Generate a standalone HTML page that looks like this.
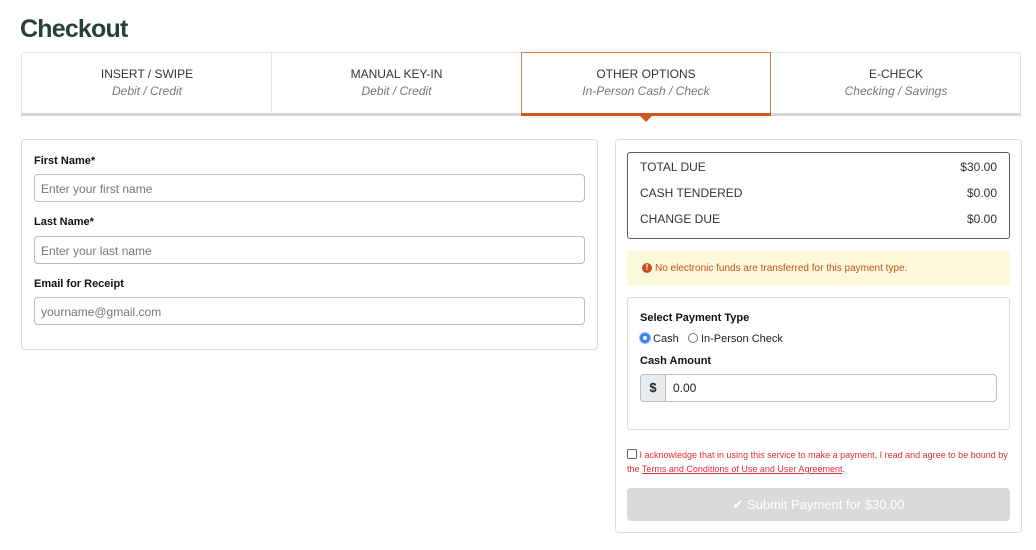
<!DOCTYPE html>
<html><head><meta charset="utf-8"><style>
*{box-sizing:border-box;margin:0;padding:0}
body{width:1036px;height:550px;background:#fff;font-family:"Liberation Sans",sans-serif;color:#222;position:relative;overflow:hidden}
.a{position:absolute}
h1{position:absolute;left:20px;top:15px;font-size:25px;font-weight:bold;color:#26403a;letter-spacing:-0.8px}
.tabs{left:21px;top:52px;width:1000px;height:65px;border:1px solid #e3e3e3;border-bottom:none;border-radius:3px 3px 0 0}
.tab{position:absolute;top:0;width:250px;height:61px;text-align:center;font-size:12px;color:#333;padding-top:13px;line-height:17px}
.tab i{color:#777}
.card{border:1px solid #ddd;border-radius:4px}
label{position:absolute;font-size:11px;font-weight:bold;color:#111}
.in{position:absolute;left:12px;width:551px;height:28px;border:1px solid #bbb;border-radius:4px;font-size:12px;color:#777;padding:7px 6px}
.row{position:absolute;left:12px;right:12px;font-size:12px;color:#333;display:flex;justify-content:space-between}
</style></head><body>
<h1>Checkout</h1>
<div class="a tabs">
 <div class="tab" style="left:0">INSERT / SWIPE<br><i>Debit / Credit</i></div>
 <div class="tab" style="left:249px;border-left:1px solid #e3e3e3">MANUAL KEY-IN<br><i>Debit / Credit</i></div>
 <div class="tab" style="left:499px;border:1px solid #e07a3c;border-bottom:none;height:62px;top:-1px">OTHER OPTIONS<br><i>In-Person Cash / Check</i></div>
 <div class="tab" style="left:749px">E-CHECK<br><i>Checking / Savings</i></div>
</div>
<div class="a" style="left:21px;top:113px;width:1000px;height:3px;background:#d6d6d6"></div>
<div class="a" style="left:521px;top:113px;width:250px;height:3px;background:#c95a1c"></div>
<div class="a" style="left:640px;top:116px;width:0;height:0;border-left:6px solid transparent;border-right:6px solid transparent;border-top:6px solid #c95a1c"></div>

<div class="a card" style="left:21px;top:139px;width:577px;height:211px">
 <label style="left:12px;top:15px">First Name*</label>
 <div class="in" style="top:34px">Enter your first name</div>
 <label style="left:12px;top:76px">Last Name*</label>
 <div class="in" style="top:96px">Enter your last name</div>
 <label style="left:12px;top:138px">Email for Receipt</label>
 <div class="in" style="top:157px">yourname@gmail.com</div>
</div>

<div class="a card" style="left:615px;top:139px;width:407px;height:394px">
 <div class="a" style="left:11px;top:12px;width:383px;height:87px;border:1px solid #4f5f5c;border-radius:3px">
  <div class="row" style="top:7px"><span>TOTAL DUE</span><span>$30.00</span></div>
  <div class="row" style="top:33px"><span>CASH TENDERED</span><span>$0.00</span></div>
  <div class="row" style="top:59px"><span>CHANGE DUE</span><span>$0.00</span></div>
 </div>
 <div class="a" style="left:11px;top:110px;width:383px;height:36px;background:#fcf8dc;border-radius:3px;font-size:10px;color:#c2521b;display:flex;align-items:center;padding-left:15px;gap:3px"><span style="display:inline-block;width:10px;height:10px;border-radius:50%;background:#c2521b;color:#fff;font-size:8px;text-align:center;line-height:10px;font-weight:bold">!</span><span>No electronic funds are transferred for this payment type.</span></div>
 <div class="a" style="left:11px;top:157px;width:383px;height:133px;border:1px solid #ddd;border-radius:3px">
  <label style="left:12px;top:14px">Select Payment Type</label>
  <div class="a" style="left:12px;top:35px;font-size:11px;color:#222">
   <span style="display:inline-block;width:10px;height:10px;border-radius:50%;border:3px solid #3b82f6;background:#fff;vertical-align:-1px;box-shadow:0 0 0 1px #9bbcf5"></span> Cash &nbsp;
   <span style="display:inline-block;width:10px;height:10px;border-radius:50%;border:1px solid #777;vertical-align:-1px"></span> In-Person Check</div>
  <label style="left:12px;top:57px">Cash Amount</label>
  <div class="a" style="left:12px;top:76px;width:357px;height:28px;border:1px solid #bbb;border-radius:4px;overflow:hidden">
   <div class="a" style="left:0;top:0;width:25px;height:28px;background:#e9ecef;border-right:1px solid #bbb;font-size:13px;font-weight:bold;text-align:center;line-height:26px">$</div>
   <div class="a" style="left:32px;top:6px;font-size:12px;color:#222">0.00</div>
  </div>
 </div>
 <div class="a" style="left:11px;top:308px;width:382px;font-size:9px;line-height:14px;color:#d9303a"><span style="display:inline-block;width:10px;height:10px;border:1px solid #666;border-radius:2px;vertical-align:-1px;background:#fff"></span> I acknowledge that in using this service to make a payment, I read and agree to be bound by the <u>Terms and Conditions of Use and User Agreement</u>.</div>
 <div class="a" style="left:11px;top:348px;width:383px;height:33px;background:#d9d9d9;border-radius:4px;color:#fff;font-size:13px;text-align:center;line-height:33px">✔ Submit Payment for $30.00</div>
</div>
</body></html>
